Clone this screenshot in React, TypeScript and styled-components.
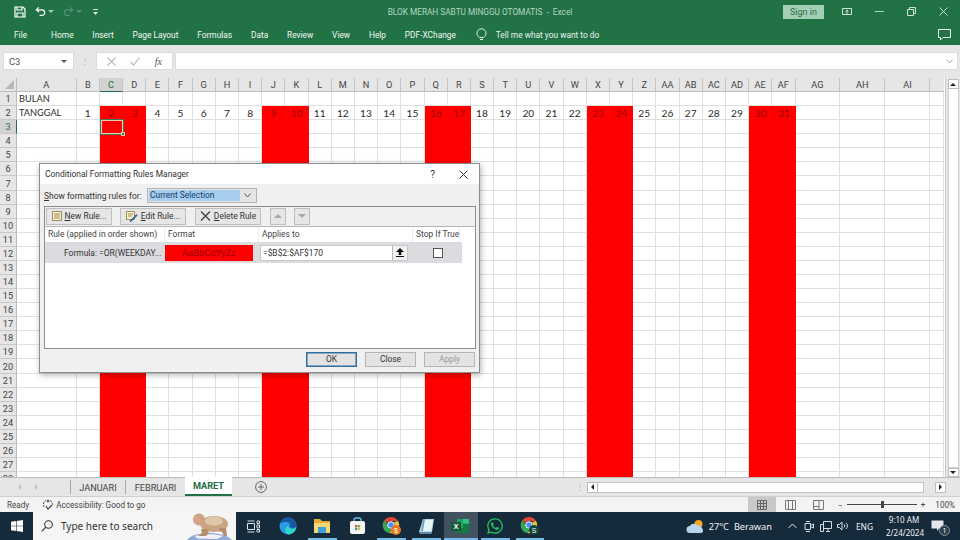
import React from 'react';
import styled, { createGlobalStyle } from 'styled-components';
import { FaWhatsapp } from 'react-icons/fa';

const UI = 'Roboto, "Noto Sans", "Liberation Sans", sans-serif';

const GlobalStyle = createGlobalStyle`
  html, body { margin: 0; padding: 0; background: #e6e6e6; }
  * { box-sizing: border-box; }
`;

const columns = ['A', 'B', 'C', 'D', 'E', 'F', 'G', 'H', 'I', 'J', 'K', 'L', 'M', 'N', 'O', 'P', 'Q', 'R', 'S', 'T', 'U', 'V', 'W', 'X', 'Y', 'Z', 'AA', 'AB', 'AC', 'AD', 'AE', 'AF', 'AG', 'AH', 'AI'];
const redColumns = ['C', 'D', 'J', 'K', 'Q', 'R', 'X', 'Y', 'AE', 'AF'];
const rows = Array.from({ length: 28 }, (_, i) => i + 1);
const ribbonTabs = ['Home', 'Insert', 'Page Layout', 'Formulas', 'Data', 'Review', 'View', 'Help', 'PDF-XChange'];

const Page = styled.div`
  position: relative;
  display: flex;
  flex-direction: column;
  width: 960px;
  height: 540px;
  overflow: hidden;
  background: #e6e6e6;
  font-family: ${UI};
`;

/* title bar and ribbon tabs */
const TitleBar = styled.div`
  display: grid;
  grid-template-columns: 1fr auto 1fr;
  align-items: center;
  height: 23px;
  background: #217346;
  color: #fff;
`;

const QuickAccess = styled.div`
  display: flex;
  align-items: center;
  padding-left: 14px;
`;

const QuickIcon = styled.div<{ $ml?: number }>`
  display: flex;
  margin-left: ${p => p.$ml ?? 0}px;
  svg { display: block; }
`;

const DocTitle = styled.div`
  color: #b5d3c2;
  font-size: 8.27px;
  white-space: pre;
`;

const WindowControls = styled.div`
  display: flex;
  align-items: center;
  justify-content: flex-end;
  padding-right: 1px;
`;

const SignIn = styled.div`
  width: 41px;
  height: 14px;
  margin-right: 7px;
  background: #a3cfb5;
  color: #2a6d49;
  font-size: 9px;
  line-height: 14px;
  text-align: center;
`;

const WinButton = styled.div`
  display: flex;
  justify-content: center;
  width: 32px;
  svg { display: block; }
`;

const RibbonTabs = styled.div`
  display: flex;
  align-items: center;
  height: 22px;
  padding: 1px 9px 0 14px;
  background: #217346;
  color: #f2f7f4;
  font-size: 8.35px;
`;

const FileTab = styled.span`
  margin-right: 24px;
`;

const RibbonTab = styled.span`
  margin-right: 18.8px;
`;

const TellMe = styled.div`
  display: flex;
  align-items: center;
  gap: 9px;
  flex: 1;
  margin-left: 1px;
  color: #e9f2ed;
`;

const CommentIcon = styled.div`
  display: flex;
  svg { display: block; }
`;

/* formula bar */
const FormulaBar = styled.div`
  display: flex;
  align-items: center;
  height: 33px;
  padding: 0 2px 1px 3px;
  background: #e6e6e6;
`;

const NameBox = styled.div`
  display: flex;
  align-items: center;
  justify-content: space-between;
  width: 71px;
  height: 18px;
  padding: 0 6px 0 5px;
  background: #fff;
  border: 1px solid #dcdcdc;
  color: #555;
  font-size: 9.4px;
`;

const Caret = styled.i<{ $color?: string }>`
  width: 0;
  height: 0;
  border-left: 3px solid transparent;
  border-right: 3px solid transparent;
  border-top: 3px solid ${p => p.$color ?? '#555'};
`;

const Grip = styled.div`
  width: 22px;
  color: #aaa;
  font-size: 8px;
  line-height: 3px;
  text-align: center;
`;

const FormulaButtons = styled.div`
  display: flex;
  align-items: center;
  justify-content: space-around;
  width: 77px;
  height: 18px;
  padding: 0 3px;
  background: #fff;
  border: 1px solid #dcdcdc;
  svg { display: block; }
`;

const Fx = styled.span`
  color: #555;
  font-family: "Liberation Serif", serif;
  font-size: 10px;
  font-style: italic;
`;

const FormulaInput = styled.div`
  display: flex;
  align-items: center;
  justify-content: flex-end;
  flex: 1;
  height: 18px;
  margin-left: 2px;
  padding-right: 4px;
  background: #fff;
  border: 1px solid #dcdcdc;
`;

/* worksheet */
const SheetArea = styled.div`
  display: flex;
  height: 399px;
`;

const Grid = styled.div`
  display: grid;
  grid-template-columns: 17px 59.7px repeat(31, 23.2px) 44.7px 45.3px 45px 14px;
  grid-auto-rows: 14.08px;
  grid-template-rows: 14px;
  align-content: start;
  width: 945px;
  height: 399px;
  overflow: hidden;
  background: #fff;
  font-family: Lato, "Liberation Sans", sans-serif;
`;

const Corner = styled.div`
  position: relative;
  background: #e6e6e6;
  border-right: 1px solid #bcbcbc;
  border-bottom: 1px solid #bcbcbc;
  &::after {
    content: '';
    position: absolute;
    right: 2px;
    bottom: 2px;
    width: 9px;
    height: 9px;
    background: #b9b9b9;
    clip-path: polygon(100% 0, 100% 100%, 0 100%);
  }
`;

const ColHead = styled.div<{ $on?: boolean }>`
  display: flex;
  align-items: center;
  justify-content: center;
  background: ${p => (p.$on ? '#d2d2d2' : '#e6e6e6')};
  border-right: 1px solid #c4c4c4;
  border-bottom: ${p => (p.$on ? '1px solid #217346' : '1px solid #bcbcbc')};
  color: ${p => (p.$on ? '#2c6e49' : '#444')};
  font-family: ${UI};
  font-size: 9.2px;
`;

const EndHead = styled.div`
  background: #e6e6e6;
  border-bottom: 1px solid #bcbcbc;
`;

const RowHead = styled.div<{ $on?: boolean }>`
  display: flex;
  align-items: center;
  justify-content: center;
  background: ${p => (p.$on ? '#d2d2d2' : '#e6e6e6')};
  border-right: ${p => (p.$on ? '1px solid #217346' : '1px solid #bcbcbc')};
  border-bottom: 1px solid #c8c8c8;
  color: ${p => (p.$on ? '#2c6e49' : '#444')};
  font-family: ${UI};
  font-size: 9.2px;
`;

const Cell = styled.div<{ $red?: boolean; $num?: boolean }>`
  display: flex;
  align-items: center;
  justify-content: ${p => (p.$num ? 'center' : 'flex-start')};
  padding: ${p => (p.$num ? '0' : '0 2px')};
  background: ${p => (p.$red ? '#ff0000' : '#fff')};
  border-right: ${p => (p.$red ? '0' : '1px solid #e0e0e0')};
  border-bottom: ${p => (p.$red ? '0' : '1px solid #e0e0e0')};
  color: ${p => (p.$red ? '#a00000' : '#2b2b2b')};
  font-size: ${p => (p.$num ? '10.2px' : '9.2px')};
  white-space: nowrap;
`;

const ActiveCell = styled.div`
  position: relative;
  z-index: 1;
  margin: -1px -1px -1px 0;
  background: #ff0000;
  border: 1px solid #3f7a55;
  box-shadow: inset 0 0 0 1px #e6cdb4;
`;

const FillHandle = styled.i`
  position: absolute;
  right: -2px;
  bottom: -2px;
  width: 4px;
  height: 4px;
  background: #3f7a55;
  border: 1px solid #e6cdb4;
`;

const VScroll = styled.div`
  display: flex;
  flex-direction: column;
  align-items: center;
  width: 15px;
  padding: 1px 0 0;
  background: #e6e6e6;
  border-left: 1px solid #c8c8c8;
`;

const ScrollBtn = styled.div<{ $h?: number }>`
  display: flex;
  flex: none;
  align-items: center;
  justify-content: center;
  width: 11px;
  height: ${p => p.$h ?? 10}px;
  background: #fff;
  border: 1px solid #bdbdbd;
`;

const VTrack = styled.div`
  flex: 1;
  width: 11px;
  background: #fff;
  border: 1px solid #cfcfcf;
  border-top: 0;
`;

const Tri = styled.i<{ $dir: 'up' | 'down' | 'left' | 'right'; $color?: string; $size?: number }>`
  width: 0;
  height: 0;
  border: ${p => p.$size ?? 3}px solid transparent;
  ${p => p.$dir === 'up' && `border-top: 0; border-bottom-color: ${p.$color ?? '#222'};`}
  ${p => p.$dir === 'down' && `border-bottom: 0; border-top-color: ${p.$color ?? '#222'};`}
  ${p => p.$dir === 'left' && `border-left: 0; border-right-color: ${p.$color ?? '#222'};`}
  ${p => p.$dir === 'right' && `border-right: 0; border-left-color: ${p.$color ?? '#222'};`}
`;

/* sheet tabs */
const TabBar = styled.div`
  display: flex;
  align-items: center;
  height: 20px;
  background: #e6e6e6;
  border-top: 1px solid #bcbcbc;
  border-bottom: 1px solid #cfcfcf;
`;

const TabNav = styled.div`
  display: flex;
  align-items: center;
  gap: 14px;
  width: 70px;
  padding-left: 18px;
`;

const SheetTab = styled.div<{ $on?: boolean; $w: number }>`
  display: flex;
  align-items: center;
  justify-content: center;
  width: ${p => p.$w}px;
  height: ${p => (p.$on ? '19px' : '14px')};
  margin-top: ${p => (p.$on ? '-1px' : '0')};
  background: ${p => (p.$on ? '#fff' : 'transparent')};
  border-left: ${p => (p.$on ? '0' : '1px solid #a8a8a8')};
  border-bottom: ${p => (p.$on ? '2px solid #217346' : '0')};
  color: ${p => (p.$on ? '#1f6d43' : '#444')};
  font-size: 9.2px;
  font-weight: ${p => (p.$on ? 700 : 400)};
`;

const AddSheet = styled.div`
  display: flex;
  width: 12px;
  margin-left: 23px;
  margin-right: 309px;
  svg { display: block; }
`;

const Dots = styled.div`
  width: 11px;
  color: #aaa;
  font-size: 8px;
  line-height: 3px;
`;

const HScroll = styled.div`
  display: flex;
  align-items: center;
  flex: 1;
`;

const HTrack = styled.div`
  width: 326px;
  height: 11px;
  background: #fff;
  border: 1px solid #c4c4c4;
  border-left: 0;
`;

const RightBtn = styled(ScrollBtn)`
  margin-left: 11px;
`;

/* status bar */
const StatusBar = styled.div`
  display: flex;
  align-items: center;
  height: 15px;
  padding: 0 5px 0 7px;
  background: #f3f3f3;
  color: #444;
  font-size: 8.15px;
`;

const Ready = styled.span`
  margin-right: 13px;
`;

const Accessibility = styled.div`
  display: flex;
  align-items: center;
  gap: 2px;
  flex: 1;
  svg { display: block; }
`;

const ViewButton = styled.div<{ $on?: boolean }>`
  display: flex;
  align-items: center;
  justify-content: center;
  width: 28.5px;
  height: 15px;
  background: ${p => (p.$on ? '#c8c8c8' : 'transparent')};
  svg { display: block; }
`;

const ZoomBar = styled.div`
  display: flex;
  align-items: center;
  gap: 4px;
  margin-left: 5px;
`;

const ZoomTrack = styled.div`
  position: relative;
  width: 70px;
  height: 1px;
  background: #444;
`;

const ZoomThumb = styled.i`
  position: absolute;
  left: 34px;
  top: -3px;
  width: 3px;
  height: 7px;
  background: #444;
`;

const ZoomValue = styled.span`
  margin-left: 10px;
`;

/* taskbar */
const Taskbar = styled.div`
  display: flex;
  align-items: stretch;
  height: 28px;
  background: #152a3a;
  color: #f0f3f6;
`;

const Start = styled.div`
  display: flex;
  align-items: center;
  justify-content: center;
  width: 33px;
  svg { display: block; }
`;

const SearchBox = styled.div`
  position: relative;
  display: flex;
  align-items: center;
  gap: 8px;
  width: 203px;
  padding-left: 8px;
  overflow: hidden;
  background: #f5f5f5;
  color: #333;
  font-family: "Noto Sans", sans-serif;
  font-size: 10px;
  svg { display: block; }
`;

const SearchArt = styled.svg`
  position: absolute;
  right: 3px;
  top: 0;
`;

const TaskIcon = styled.div<{ $running?: boolean; $active?: boolean }>`
  position: relative;
  display: flex;
  align-items: center;
  justify-content: center;
  width: 34.6px;
  background: ${p => (p.$active ? '#43525f' : 'transparent')};
  svg { display: block; }
  &::after {
    content: '';
    position: absolute;
    left: ${p => (p.$active ? '0' : '3px')};
    right: ${p => (p.$active ? '0' : '3px')};
    bottom: 0;
    height: 2px;
    background: ${p => (p.$running ? '#76b9ed' : 'transparent')};
  }
`;

const Tray = styled.div`
  display: flex;
  align-items: center;
  justify-content: flex-end;
  flex: 1;
  padding-right: 12px;
  font-family: "Noto Sans", sans-serif;
  font-size: 9px;
  svg { display: block; }
`;

const Weather = styled.div`
  display: flex;
  align-items: center;
  gap: 5px;
  margin-right: 12px;
  font-size: 9.2px;
`;

const TrayIcon = styled.div`
  display: flex;
  justify-content: center;
  width: 17px;
`;

const Lang = styled.span`
  margin-left: 4px;
  margin-right: 13px;
  font-size: 8.4px;
`;

const Clock = styled.div`
  width: 36px;
  margin-right: 9px;
  margin-top: -1px;
  font-size: 8px;
  line-height: 13px;
  text-align: center;
  white-space: nowrap;
`;

const NotifyWrap = styled.div`
  position: relative;
  width: 17px;
`;

const NotifyBadge = styled.span`
  position: absolute;
  right: -2px;
  bottom: -4px;
  width: 11px;
  height: 11px;
  background: #2f3d49;
  border: 1px solid #8b949c;
  border-radius: 50%;
  color: #fff;
  font-size: 7px;
  line-height: 9px;
  text-align: center;
`;

/* dialog */
const Dialog = styled.div`
  position: absolute;
  left: 39px;
  top: 163px;
  display: flex;
  flex-direction: column;
  width: 441px;
  height: 210px;
  background: #f0f0f0;
  border: 1px solid #8c8c8c;
  box-shadow: 1px 2px 6px rgba(0, 0, 0, 0.3);
  color: #333;
  font-size: 8.45px;
`;

const DialogTitle = styled.div`
  display: flex;
  align-items: center;
  height: 20px;
  padding: 0 11px 0 5px;
  background: #fff;
  font-size: 8.44px;
`;

const TitleText = styled.span`
  flex: 1;
`;

const Help = styled.span`
  margin-right: 24px;
  font-size: 10px;
`;

const ForRow = styled.div`
  display: flex;
  align-items: center;
  height: 21px;
  padding: 2px 0 0 4px;
`;

const ForLabel = styled.span`
  width: 103px;
  white-space: nowrap;
`;

const Combo = styled.div`
  display: flex;
  align-items: center;
  width: 110px;
  height: 15px;
  padding: 1px;
  background: #e4e4e4;
  border: 1px solid #b4b4b4;
`;

const ComboValue = styled.div`
  flex: 1;
  height: 11px;
  padding-left: 1px;
  background: #a6cdee;
  color: #10406c;
  line-height: 11px;
`;

const ComboArrow = styled.div`
  display: flex;
  justify-content: center;
  width: 15px;
  svg { display: block; }
`;

const RulesBox = styled.div`
  display: flex;
  flex-direction: column;
  height: 143px;
  margin: 1px 3px 0 4px;
  background: #fff;
  border: 1px solid #8d8d8d;
`;

const RulesToolbar = styled.div`
  display: flex;
  align-items: center;
  height: 20px;
  padding: 0 0 1px 1px;
  background: #f0f0f0;
  border-bottom: 1px solid #b5b5b5;
`;

const ToolButton = styled.div<{ $w: number; $gap: number }>`
  display: flex;
  align-items: center;
  justify-content: center;
  gap: 3px;
  width: ${p => p.$w}px;
  height: 17px;
  margin-right: ${p => p.$gap}px;
  background: #e6e6e6;
  border: 1px solid #bfbfbf;
  svg { display: block; flex: none; }
`;

const HeaderRow = styled.div`
  display: grid;
  grid-template-columns: 120px 94px 154px 47px;
  height: 15px;
  color: #444;
  line-height: 15px;
`;

const HeaderCell = styled.div`
  padding-left: 3px;
  white-space: nowrap;
  border-right: 1px solid #eee;
`;

const RuleRow = styled.div`
  display: grid;
  grid-template-columns: 120px 94px 154px 54px;
  align-items: center;
  width: 417px;
  height: 21px;
  background: #dcdce0;
`;

const RuleName = styled.div`
  padding-left: 19px;
  white-space: nowrap;
`;

const Swatch = styled.div`
  width: 88px;
  height: 16px;
  background: #ff0000;
  color: #980000;
  font-size: 9.4px;
  line-height: 16px;
  text-align: center;
`;

const AppliesTo = styled.div`
  display: flex;
  align-items: center;
  justify-content: space-between;
  width: 148px;
  height: 16px;
  margin-left: 1px;
  padding-left: 2px;
  background: #fff;
  border: 1px solid #c8c8c8;
`;

const PickButton = styled.div`
  display: flex;
  align-items: center;
  justify-content: center;
  width: 15px;
  height: 14px;
  background: #f0f0f0;
  border-left: 1px solid #b5b5b5;
  svg { display: block; }
`;

const CheckBox = styled.div`
  width: 10px;
  height: 10px;
  margin-left: 20px;
  background: #fff;
  border: 1px solid #555;
`;

const DialogActions = styled.div`
  display: flex;
  justify-content: flex-end;
  gap: 8px;
  padding: 3px 4px 0 0;
`;

const ActionButton = styled.div<{ $primary?: boolean; $off?: boolean }>`
  width: 51px;
  height: 15px;
  background: #e3e3e3;
  border: 1px solid ${p => (p.$primary ? '#2d6f9e' : '#b5b5b5')};
  ${p => (p.$primary ? 'box-shadow: inset 0 0 0 0.5px #2d6f9e;' : '')}
  color: ${p => (p.$off ? '#9a9a9a' : '#333')};
  line-height: 13px;
  text-align: center;
`;

function EdgeIcon() {
  return (
    <svg width="18" height="18" viewBox="0 0 18 18">
      <circle cx="9" cy="9" r="8.500" fill="#2a9ae6" />
      <path d="M1 7C2.500 2.500 6 .5 9 .5c4.500 0 8 3 8.500 7.500 0 2-1.500 3-3.500 3-2 0-3.500-.8-3.500-1.500 1-1 .5-3-1-4C7 4.500 3 5 1 7z" fill="#14599f" />
      <path d="M17.500 10c-.5 3.500-3 6.500-6.500 7.300-3 .5-5-1.500-5-4.300 0-2.500 2-4 3.500-4.300-.5 1.500.5 3 3 3.300 2 .3 4-.3 5-2z" fill="#2fd6c3" />
    </svg>
  );
}

function ChromeIcon({ badge, text }: { badge: string; text: string }) {
  return (
    <svg width="20" height="20" viewBox="0 0 20 20">
      <path d="M9 1a8 8 0 0 1 7 4H9a4 4 0 0 0-4 3L2.500 4A8 8 0 0 1 9 1z" fill="#e0453a" />
      <path d="M2.500 4 5.800 10a4 4 0 0 0 4 3l-2.400 4A8 8 0 0 1 2.500 4z" fill="#34a853" />
      <path d="M16 5a8 8 0 0 1-8.600 12l3.800-5a4 4 0 0 0 .8-6z" fill="#f5c02c" />
      <circle cx="9" cy="9" r="3.300" fill="#4a8df2" stroke="#fff" />
      <circle cx="14" cy="14" r="5" fill={badge} />
      <text x="14" y="16.500" fill="#fff" fontSize="7" textAnchor="middle" fontFamily="Liberation Sans">{text}</text>
    </svg>
  );
}

function MonkeyArt() {
  return (
    <SearchArt width="46" height="28" viewBox="0 0 46 28">
      <path d="M0 28c4-5 12-7 22-7s18 2 23 7z" fill="#93a9d6" />
      <path d="M8 24c8-2.500 20-2.500 28 0l-6 3-20-.5z" fill="#eef1f8" />
      <ellipse cx="27" cy="12" rx="14" ry="8" fill="#c9a584" />
      <path d="M14 17h6l2 4-3 3h-8l4-3zM32 16h7l1 8h-3l-2-4-3-1z" fill="#b58f6d" />
      <circle cx="12" cy="7.500" r="6" fill="#c9a584" />
      <ellipse cx="10" cy="8" rx="3.500" ry="4" fill="#dca08f" />
      <ellipse cx="27" cy="9" rx="9" ry="4.500" fill="#e0c7a9" />
    </SearchArt>
  );
}

export default function App() {
  return (
    <Page>
      <GlobalStyle />
      <TitleBar>
        <QuickAccess>
          <QuickIcon>
            <svg width="12" height="12" viewBox="0 0 12 12" fill="none" stroke="#fff" strokeWidth="1.2">
              <path d="M1 1h8l2 2v8H1z" />
              <path d="M3 1v3h5V1M3 11V7h6v4" />
            </svg>
          </QuickIcon>
          <QuickIcon $ml={9}>
            <svg width="12" height="11" viewBox="0 0 13 11" fill="none" stroke="#fff" strokeWidth="1.3">
              <path d="M4 1 1.500 3.800 4.500 6" />
              <path d="M2 3.800h5.500a3 3 0 0 1 0 6H5" />
            </svg>
          </QuickIcon>
          <QuickIcon $ml={1}><Caret $color="#a6c9b5" /></QuickIcon>
          <QuickIcon $ml={8}>
            <svg width="12" height="11" viewBox="0 0 13 11" fill="none" stroke="#57937a" strokeWidth="1.3">
              <path d="M9 1l2.500 2.800L8.500 6" />
              <path d="M11 3.800H5.500a3 3 0 0 0 0 6H8" />
            </svg>
          </QuickIcon>
          <QuickIcon $ml={2}><Caret $color="#57937a" /></QuickIcon>
          <QuickIcon $ml={10}>
            <svg width="7" height="8" viewBox="0 0 7 8" fill="#d6e7dd">
              <path d="M1 1h5v1H1zM1 4h5L3.500 7z" />
            </svg>
          </QuickIcon>
        </QuickAccess>
        <DocTitle>{'BLOK MERAH SABTU MINGGU OTOMATIS  -  Excel'}</DocTitle>
        <WindowControls>
          <SignIn>Sign in</SignIn>
          <WinButton>
            <svg width="10" height="9" viewBox="0 0 10 9" fill="none" stroke="#cfe3d7">
              <path d="M.5 1.500h9v6h-9zM5 7V3M3.500 4.500 5 3l1.500 1.500" />
            </svg>
          </WinButton>
          <WinButton>
            <svg width="9" height="9" viewBox="0 0 9 9" stroke="#b7d3c3"><path d="M0 4.500h9" /></svg>
          </WinButton>
          <WinButton>
            <svg width="9" height="9" viewBox="0 0 9 9" fill="none" stroke="#cfe3d7"><path d="M.5 2.500h6v6h-6zM2.500 2.500v-2h6v6h-2" /></svg>
          </WinButton>
          <WinButton>
            <svg width="9" height="9" viewBox="0 0 9 9" stroke="#cfe3d7"><path d="M.5.500l8 8M8.500.500l-8 8" /></svg>
          </WinButton>
        </WindowControls>
      </TitleBar>
      <RibbonTabs>
        <FileTab>File</FileTab>
        {ribbonTabs.map(t => <RibbonTab key={t}>{t}</RibbonTab>)}
        <TellMe>
          <svg width="11" height="13" viewBox="0 0 11 13" fill="none" stroke="#e9f2ed">
            <path d="M3.500 9.500C2 8.500 1 7 1 5.300a4.500 4.500 0 0 1 9 0C10 7 9 8.500 7.500 9.500zM4 11.500h3" />
          </svg>
          <span>Tell me what you want to do</span>
        </TellMe>
        <CommentIcon>
          <svg width="13" height="12" viewBox="0 0 13 12" fill="none" stroke="#e9f2ed">
            <path d="M.5.500h12v8H5L2.500 11V8.500h-2z" />
          </svg>
        </CommentIcon>
      </RibbonTabs>
      <FormulaBar>
        <NameBox>C3<Caret /></NameBox>
        <Grip>⋮</Grip>
        <FormulaButtons>
          <svg width="9" height="9" viewBox="0 0 9 9" stroke="#bdbdbd" strokeWidth="1.2"><path d="M.5.500l8 8M8.500.500l-8 8" /></svg>
          <svg width="10" height="9" viewBox="0 0 10 9" fill="none" stroke="#bdbdbd" strokeWidth="1.2"><path d="M.5 5 3.500 8 9.500.500" /></svg>
          <Fx>fx</Fx>
        </FormulaButtons>
        <FormulaInput>
          <svg width="7" height="5" viewBox="0 0 7 5" fill="none" stroke="#aaa"><path d="M.5.500 3.500 4 6.500.500" /></svg>
        </FormulaInput>
      </FormulaBar>
      <SheetArea>
        <Grid>
          <Corner />
          {columns.map(c => <ColHead key={c} $on={c === 'C'}>{c}</ColHead>)}
          <EndHead />
          {rows.map(r => (
            <React.Fragment key={r}>
              <RowHead $on={r === 3}>{r}</RowHead>
              {columns.map((c, i) => {
                if (r === 3 && c === 'C') return <ActiveCell key={c}><FillHandle /></ActiveCell>;
                const red = r >= 2 && redColumns.includes(c);
                let text: React.ReactNode = null;
                if (c === 'A' && r === 1) text = 'BULAN';
                if (c === 'A' && r === 2) text = 'TANGGAL';
                if (r === 2 && i > 0 && i <= 31) text = i;
                return <Cell key={c} $red={red} $num={i > 0}>{text}</Cell>;
              })}
              <Cell />
            </React.Fragment>
          ))}
        </Grid>
        <VScroll>
          <ScrollBtn><Tri $dir="up" /></ScrollBtn>
          <VTrack />
          <ScrollBtn $h={9}><Tri $dir="down" /></ScrollBtn>
        </VScroll>
      </SheetArea>
      <TabBar>
        <TabNav>
          <Tri $dir="left" $color="#c0c0c0" />
          <Tri $dir="right" $color="#c0c0c0" />
        </TabNav>
        <SheetTab $w={55}>JANUARI</SheetTab>
        <SheetTab $w={60}>FEBRUARI</SheetTab>
        <SheetTab $w={47} $on>MARET</SheetTab>
        <AddSheet>
          <svg width="12" height="12" viewBox="0 0 12 12" fill="none" stroke="#666">
            <circle cx="6" cy="6" r="5.400" />
            <path d="M6 3v6M3 6h6" />
          </svg>
        </AddSheet>
        <Dots>⋮</Dots>
        <HScroll>
          <ScrollBtn $h={11}><Tri $dir="left" /></ScrollBtn>
          <HTrack />
          <RightBtn $h={11}><Tri $dir="right" /></RightBtn>
        </HScroll>
      </TabBar>
      <StatusBar>
        <Ready>Ready</Ready>
        <Accessibility>
          <svg width="12" height="12" viewBox="0 0 12 12" fill="none" stroke="#444">
            <path d="M2 8a4.500 4.500 0 0 1 2-6.500M8 1.500A4.500 4.500 0 0 1 10.500 6" strokeDasharray="2 1" />
            <circle cx="6" cy="2" r="1" />
            <path d="M4 7l2 3 4-4" strokeWidth="1.200" />
          </svg>
          <span>Accessibility: Good to go</span>
        </Accessibility>
        <ViewButton $on>
          <svg width="10" height="10" viewBox="0 0 10 10" fill="none" stroke="#666"><path d="M.5.500h9v9h-9zM3.500.5v9M6.500.5v9M.5 3.500h9M.5 6.500h9" /></svg>
        </ViewButton>
        <ViewButton>
          <svg width="11" height="10" viewBox="0 0 11 10" fill="none" stroke="#777"><path d="M.5.500h10v9H.5zM3.500.5v9M7.500.5v9" /></svg>
        </ViewButton>
        <ViewButton>
          <svg width="11" height="10" viewBox="0 0 11 10" fill="none" stroke="#777"><path d="M.5.500h10v9H.5zM.5 6.500h5.500v3M6 .5v6" /></svg>
        </ViewButton>
        <ZoomBar>
          <span>−</span>
          <ZoomTrack><ZoomThumb /></ZoomTrack>
          <span>+</span>
        </ZoomBar>
        <ZoomValue>100%</ZoomValue>
      </StatusBar>
      <Taskbar>
        <Start>
          <svg width="12" height="12" viewBox="0 0 12 12" fill="#fff">
            <path d="M0 1.700 5 1v4.700H0zM5.600.9 12 0v5.700H5.600zM0 6.300h5V11l-5-.7zM5.600 6.300H12V12l-6.400-.9z" />
          </svg>
        </Start>
        <SearchBox>
          <svg width="12" height="12" viewBox="0 0 12 12" fill="none" stroke="#333" strokeWidth="1.100">
            <circle cx="7.500" cy="4.500" r="3.800" />
            <path d="M4.800 7.200.7 11.300" />
          </svg>
          <span>Type here to search</span>
          <MonkeyArt />
        </SearchBox>
        <TaskIcon>
          <svg width="13" height="13" viewBox="0 0 13 13" fill="none" stroke="#dfe4e8">
            <path d="M.5 3.500h7v6h-7zM.5 1h7M.5 12h7" />
            <path d="M10 1h2.500v2.500H10zM10 5h2.500v3H10zM10 9.500h2.500V12H10z" />
          </svg>
        </TaskIcon>
        <TaskIcon><EdgeIcon /></TaskIcon>
        <TaskIcon $running>
          <svg width="18" height="16" viewBox="0 0 18 16">
            <path d="M1 1h6l2 2h8v12H1z" fill="#e6ac35" />
            <path d="M1 5h16v10H1z" fill="#f7d774" />
            <path d="M5 9h8v6H5z" fill="#3d9fdc" />
          </svg>
        </TaskIcon>
        <TaskIcon>
          <svg width="17" height="18" viewBox="0 0 17 18">
            <path d="M5 5V3a2 2 0 0 1 2-2h3a2 2 0 0 1 2 2v2" fill="none" stroke="#6cc3e8" strokeWidth="1.300" />
            <rect x="1" y="4" width="15" height="13" rx="2" fill="#f4f4f4" />
            <path d="M6 8h2.300v2.300H6z" fill="#e2492f" />
            <path d="M8.800 8h2.300v2.300H8.800z" fill="#7ab51d" />
            <path d="M6 10.800h2.300v2.300H6z" fill="#2a9ad6" />
            <path d="M8.800 10.800h2.300v2.300H8.800z" fill="#f5b90f" />
          </svg>
        </TaskIcon>
        <TaskIcon $running><ChromeIcon badge="#e9781c" text="$" /></TaskIcon>
        <TaskIcon $running>
          <svg width="17" height="17" viewBox="0 0 17 17">
            <path d="M5 1h11l-2 13H1z" fill="#bcdce8" />
            <path d="M7 2h8l-2 11H3z" fill="#e9f4f8" />
            <path d="M1 14h13l-.5 2H2z" fill="#5f8ba3" />
            <path d="M3 13 5 1h2L5 13z" fill="#6ea7c2" />
          </svg>
        </TaskIcon>
        <TaskIcon $running $active>
          <svg width="19" height="16" viewBox="0 0 19 16">
            <path d="M6 1h12v14H6z" fill="#21a366" />
            <path d="M12 1h6v4.700h-6z" fill="#33c481" />
            <path d="M6 10h12v5H6z" fill="#107c41" />
            <path d="M12 5.700h6v4.600h-6z" fill="#107c41" />
            <path d="M0 4h10v9H0z" fill="#185c37" />
            <text x="5" y="11" fill="#fff" fontSize="7.500" fontWeight="700" textAnchor="middle" fontFamily="Liberation Sans">X</text>
          </svg>
        </TaskIcon>
        <TaskIcon $running><FaWhatsapp size={18} color="#25c45e" /></TaskIcon>
        <TaskIcon $running><ChromeIcon badge="#12473c" text="S" /></TaskIcon>
        <Tray>
          <Weather>
            <svg width="18" height="15" viewBox="0 0 18 15">
              <circle cx="12.500" cy="5" r="4" fill="#f5a623" />
              <path d="M4 14a3.500 3.500 0 0 1 0-7c1-2.500 5-3 7-1 3 0 5 2 6 5 .5 2-1 3-2 3z" fill="#b9d4ef" />
            </svg>
            <span>27°C</span>
            <span>Berawan</span>
          </Weather>
          <TrayIcon>
            <svg width="9" height="6" viewBox="0 0 9 6" fill="none" stroke="#e4e8ec"><path d="M.5 5 4.500 1l4 4" /></svg>
          </TrayIcon>
          <TrayIcon>
            <svg width="10" height="13" viewBox="0 0 10 13" fill="none" stroke="#d5dadf"><path d="M1 3.500h5.500v6H1zM6.500 5.500 9.500 4v4L6.500 6.500M2 1.500h4M2 11.500h4" /></svg>
          </TrayIcon>
          <TrayIcon>
            <svg width="12" height="11" viewBox="0 0 12 11" fill="none" stroke="#d5dadf"><path d="M3.500.500h8v7h-8zM.5 3.500h3v7h-3zM6 10.500h4M8 7.500v3" /></svg>
          </TrayIcon>
          <TrayIcon>
            <svg width="12" height="10" viewBox="0 0 12 10" fill="none" stroke="#d5dadf"><path d="M.5 3.500h2L5 1v8L2.500 6.500h-2zM7 3.500a2 2 0 0 1 0 3M9 2a4 4 0 0 1 0 6" /></svg>
          </TrayIcon>
          <Lang>ENG</Lang>
          <Clock>9:10 AM<br />2/24/2024</Clock>
          <NotifyWrap>
            <svg width="13" height="12" viewBox="0 0 13 12" fill="#e4e8ec"><path d="M.5.500h12v8H8L6 11V8.500H.5z" /></svg>
            <NotifyBadge>1</NotifyBadge>
          </NotifyWrap>
        </Tray>
      </Taskbar>

      <Dialog>
        <DialogTitle>
          <TitleText>Conditional Formatting Rules Manager</TitleText>
          <Help>?</Help>
          <svg width="9" height="9" viewBox="0 0 9 9" stroke="#333"><path d="M.5.500l8 8M8.500.500l-8 8" /></svg>
        </DialogTitle>
        <ForRow>
          <ForLabel><u>S</u>how formatting rules for:</ForLabel>
          <Combo>
            <ComboValue>Current Selection</ComboValue>
            <ComboArrow>
              <svg width="7" height="5" viewBox="0 0 7 5" fill="none" stroke="#555"><path d="M.5.500 3.500 4 6.500.500" /></svg>
            </ComboArrow>
          </Combo>
        </ForRow>
        <RulesBox>
          <RulesToolbar>
            <ToolButton $w={66} $gap={8}>
              <svg width="10" height="10" viewBox="0 0 10 10" fill="#fbeecb" stroke="#a08c5c"><path d="M.5.500h9v9h-9zM2 3h6M2 5h6M2 7h6" /></svg>
              <span><u>N</u>ew Rule...</span>
            </ToolButton>
            <ToolButton $w={66} $gap={9}>
              <svg width="12" height="11" viewBox="0 0 12 11" fill="#fbeecb" stroke="#a08c5c">
                <path d="M.5.500h8v8h-8zM2 3h5M2 5h4" />
                <path d="M10.500 3.500 5 9l-1 1.500L5.500 10 11 4.500z" fill="#3f7fbf" stroke="#2a5f96" />
              </svg>
              <span><u>E</u>dit Rule...</span>
            </ToolButton>
            <ToolButton $w={66} $gap={9}>
              <svg width="11" height="10" viewBox="0 0 11 10" stroke="#444" strokeWidth="1.400"><path d="M1 .5l9 9M10 .5l-9 9" /></svg>
              <span><u>D</u>elete Rule</span>
            </ToolButton>
            <ToolButton $w={16} $gap={8}><Tri $dir="up" $color="#a8a8a8" $size={4} /></ToolButton>
            <ToolButton $w={16} $gap={0}><Tri $dir="down" $color="#a8a8a8" $size={4} /></ToolButton>
          </RulesToolbar>
          <HeaderRow>
            <HeaderCell>Rule (applied in order shown)</HeaderCell>
            <HeaderCell>Format</HeaderCell>
            <HeaderCell>Applies to</HeaderCell>
            <HeaderCell>Stop If True</HeaderCell>
          </HeaderRow>
          <RuleRow>
            <RuleName>Formula: =OR(WEEKDAY...</RuleName>
            <Swatch>AaBbCcYyZz</Swatch>
            <AppliesTo>
              <span>=$B$2:$AF$170</span>
              <PickButton>
                <svg width="8" height="9" viewBox="0 0 8 9" fill="#111"><path d="M4 0 8 4H5.300v3H2.700V4H0zM0 8h8v1H0z" /></svg>
              </PickButton>
            </AppliesTo>
            <CheckBox />
          </RuleRow>
        </RulesBox>
        <DialogActions>
          <ActionButton $primary>OK</ActionButton>
          <ActionButton>Close</ActionButton>
          <ActionButton $off>Apply</ActionButton>
        </DialogActions>
      </Dialog>
    </Page>
  );
}
